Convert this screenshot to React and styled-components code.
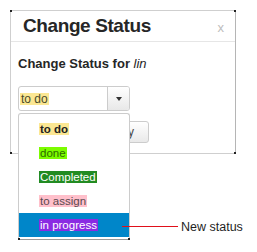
import React from 'react';
import styled, { createGlobalStyle } from 'styled-components';

const GlobalStyle = createGlobalStyle`
  html, body {
    margin: 0;
    padding: 0;
    background: #ffffff;
  }
  body {
    font-family: "Liberation Sans", Arial, sans-serif;
    color: #222;
  }
`;

const statuses = [
  { label: 'to do', bg: '#fbe793', color: '#222', bold: true },
  { label: 'done', bg: '#7cfc00', color: '#2c6a00' },
  { label: 'Completed', bg: '#228b22', color: '#ffffff' },
  { label: 'to assign', bg: '#ffc0cb', color: '#5a4a50' },
  { label: 'in progress', bg: '#8a2be2', color: '#ffffff', selected: true },
];

const App = () => {
  return (
    <Page>
      <GlobalStyle />
      <Modal>
        <Corner $top $left />
        <Corner $top $right />
        <Corner $bottom $left />
        <Corner $bottom $right />
        <Header>
          <Title>Change Status</Title>
          <Close>x</Close>
        </Header>
        <Body>
          <Subtitle>
            Change Status for <em>lin</em>
          </Subtitle>
          <SelectWrap>
            <Select>
              <SelectValue>
                <Tag $bg="#fbe793" $color="#4a4a2a">to do</Tag>
              </SelectValue>
              <ArrowButton>
                <Caret />
              </ArrowButton>
            </Select>
            <Menu>
              {statuses.map((s) => (
                <Item key={s.label} $selected={s.selected}>
                  <Tag $bg={s.bg} $color={s.color} $bold={s.bold}>
                    {s.label}
                  </Tag>
                </Item>
              ))}
              <Corner $bottom $left />
              <Corner $bottom $right />
            </Menu>
          </SelectWrap>
          <ButtonRow>
            <Button>Apply</Button>
          </ButtonRow>
        </Body>
      </Modal>
      <Pointer />
      <Note>New status</Note>
    </Page>
  );
};

const Page = styled.div`
  position: relative;
  width: 257px;
  height: 252px;
  padding: 10px 0 0 10px;
  box-sizing: border-box;
`;

const Modal = styled.div`
  position: relative;
  width: 226px;
  height: 144px;
  box-sizing: border-box;
  border: 1px solid #cfcfcf;
  border-right-color: #b5b5b5;
  background: #fff;
`;

const Corner = styled.span`
  position: absolute;
  width: 2px;
  height: 2px;
  background: #222;
  z-index: 3;
  ${(p) => (p.$top ? 'top: -1px;' : 'bottom: -1px;')}
  ${(p) => (p.$left ? 'left: -1px;' : 'right: -1px;')}
`;

const Header = styled.div`
  height: 31px;
  box-sizing: border-box;
  padding: 0 11px 0 12px;
  display: flex;
  align-items: center;
  justify-content: space-between;
  border-bottom: 1px solid #e6e6e6;
`;

const Title = styled.div`
  font-size: 19px;
  font-weight: bold;
  letter-spacing: -0.4px;
  color: #262626;
`;

const Close = styled.div`
  font-size: 13px;
  color: #bdbdbd;
  margin-top: 3px;
`;

const Body = styled.div`
  padding: 14px 0 0 7px;
`;

const Subtitle = styled.div`
  font-size: 13px;
  line-height: 16px;
  font-weight: bold;
  color: #262626;

  em {
    font-weight: normal;
  }
`;

const SelectWrap = styled.div`
  position: relative;
  width: 112px;
  margin-top: 14px;
`;

const Select = styled.div`
  height: 25px;
  box-sizing: border-box;
  display: flex;
  border: 1px solid #cccccc;
  border-radius: 3px;
  background: #fff;
`;

const SelectValue = styled.div`
  flex: 1;
  display: flex;
  align-items: center;
  padding-left: 1px;
  font-size: 12px;
`;

const ArrowButton = styled.div`
  width: 21px;
  display: flex;
  align-items: center;
  justify-content: center;
  border-left: 1px solid #cccccc;
  border-radius: 0 2px 2px 0;
  background: linear-gradient(#ffffff, #e8e8e8);
`;

const Caret = styled.span`
  width: 0;
  height: 0;
  border-left: 3px solid transparent;
  border-right: 3px solid transparent;
  border-top: 4px solid #333;
`;

const Tag = styled.span`
  background: ${(p) => p.$bg};
  color: ${(p) => p.$color};
  font-weight: ${(p) => (p.$bold ? 'bold' : 'normal')};
  padding: 0 1px;
  line-height: 12px;
`;

const Menu = styled.div`
  position: absolute;
  top: calc(100% + 2px);
  left: 0;
  width: 112px;
  box-sizing: border-box;
  padding: 3px 0 2px;
  border: 1px solid #cccccc;
  border-bottom-color: #999;
  border-radius: 3px 3px 0 0;
  background: #fff;
  z-index: 2;
`;

const Item = styled.div`
  height: 24px;
  display: flex;
  align-items: center;
  padding-left: 20px;
  font-size: 11.5px;
  background: ${(p) => (p.$selected ? '#0086c9' : 'transparent')};
`;

const ButtonRow = styled.div`
  margin-top: 10px;
  padding-left: 71px;
`;

const Button = styled.div`
  width: 60px;
  height: 22px;
  box-sizing: border-box;
  display: flex;
  align-items: center;
  justify-content: center;
  font-size: 12px;
  color: #444;
  border: 1px solid #cccccc;
  border-radius: 3px;
  background: linear-gradient(#ffffff, #e9e9e9);
`;

const Pointer = styled.div`
  position: absolute;
  left: 122px;
  top: 226px;
  width: 56px;
  height: 1px;
  background: #e0101a;
  z-index: 4;
`;

const Note = styled.div`
  position: absolute;
  left: 181px;
  top: 220px;
  font-size: 12.5px;
  line-height: 14px;
  color: #1f1f1f;
`;

export default App;
